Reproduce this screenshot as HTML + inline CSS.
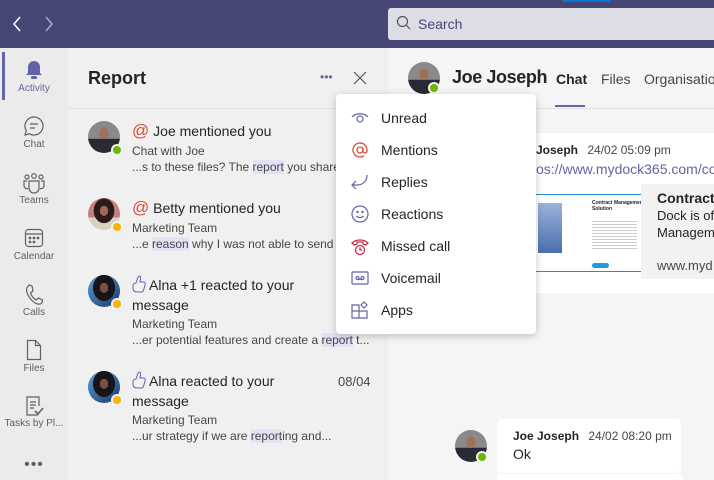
<!DOCTYPE html>
<html><head><style>
*{margin:0;padding:0;box-sizing:border-box}
body{width:714px;height:480px;overflow:hidden;font-family:"Liberation Sans",sans-serif;background:#f5f5f5;position:relative;color:#252424}
.abs{position:absolute}
.top{left:0;top:0;width:714px;height:48px;background:#464775}
.rail{left:0;top:48px;width:68px;height:432px;background:#ebebeb}
.ri{position:absolute;left:0;width:68px;text-align:center;font-size:10px;color:#616161}
.list{left:68px;top:48px;width:320px;height:432px;background:#f0f0f0}
.av{position:absolute;width:32px;height:32px;border-radius:50%}
.st{position:absolute;width:12px;height:12px;border-radius:50%;border:2px solid #f0f0f0}
.t1{font-size:14px;color:#252424}
.t2{font-size:12px;color:#484644}
.hl{background:#e2e2f6}
.menu{left:336px;top:94px;width:200px;height:240px;background:#fff;border-radius:4px;box-shadow:0 2px 8px rgba(0,0,0,.22)}
.mi{position:absolute;left:45px;font-size:14px;color:#252424}
.mic{position:absolute;left:14px;width:20px;height:20px}
.thumb{display:inline-block;vertical-align:-3px;margin-right:3px}
.joe{background:radial-gradient(ellipse at 50% 38%,#a07058 0 20%,transparent 21%),linear-gradient(180deg,#8a8a8a 0 55%,#2a2a35 56%);}
.alna{background:radial-gradient(ellipse at 50% 40%,#7a5040 0 18%,#151515 19% 48%,transparent 49%),linear-gradient(135deg,#5a9ad8,#1a3a6a);}
.betty{background:radial-gradient(ellipse at 50% 40%,#a06858 0 18%,#2a1a1a 19% 45%,transparent 46%),linear-gradient(180deg,#c08080 0 60%,#d8d0c0 61%);}
</style></head><body>
<div class="abs top"></div>
<div class="abs" style="left:563px;top:0;width:48px;height:2px;background:#0078d4"></div>
<svg class="abs" style="left:10px;top:14px" width="50" height="20"><path d="M10 3 L4 10 L10 17" stroke="#fff" stroke-width="1.5" fill="none"/><path d="M36 3 L42 10 L36 17" stroke="#a8a9c8" stroke-width="1.5" fill="none"/></svg>
<div class="abs" style="left:388px;top:8px;width:326px;height:32px;background:#dcdde5;border-radius:3px 0 0 3px"></div>
<svg class="abs" style="left:396px;top:15px" width="16" height="16"><circle cx="6.5" cy="6.5" r="5" stroke="#555" stroke-width="1.2" fill="none"/><path d="M10 10 L14 14" stroke="#555" stroke-width="1.2"/></svg>
<div class="abs" style="left:418px;top:16px;font-size:14px;color:#464775">Search</div>

<div class="abs rail"></div>
<div class="abs" style="left:2px;top:52px;width:3px;height:48px;background:#6264a7"></div>
<svg class="abs" style="left:24px;top:58px" width="20" height="22"><path d="M4 15 V9 a6 6 0 0 1 12 0 V15 L18 17 H2 Z" fill="#6264a7"/><rect x="7" y="18" width="6" height="3" rx="1.5" fill="#6264a7"/></svg>
<div class="ri" style="top:83px;color:#6264a7">Activity</div>
<svg class="abs" style="left:23px;top:115px" width="22" height="22" fill="none" stroke="#616161" stroke-width="1.2"><path d="M11 2a9 9 0 1 1-4.5 16.8L2 20l1.3-4.3A9 9 0 0 1 11 2z"/><path d="M7 9h8M7 13h5"/></svg>
<div class="ri" style="top:139px">Chat</div>
<svg class="abs" style="left:23px;top:172px" width="22" height="22" fill="none" stroke="#616161" stroke-width="1.2"><circle cx="11" cy="4" r="2.3"/><circle cx="4" cy="5" r="2"/><circle cx="18" cy="5" r="2"/><path d="M6 9h10v7a5 5 0 0 1-10 0z"/><path d="M4 9H1v5a3 3 0 0 0 4 2.5M18 9h3v5a3 3 0 0 1-4 2.5"/></svg>
<div class="ri" style="top:195px">Teams</div>
<svg class="abs" style="left:24px;top:228px" width="20" height="20" fill="none" stroke="#616161" stroke-width="1.2"><rect x="1.5" y="1.5" width="17" height="17" rx="3"/><path d="M1.5 6h17"/><circle cx="6" cy="10" r=".8" fill="#616161"/><circle cx="10" cy="10" r=".8" fill="#616161"/><circle cx="14" cy="10" r=".8" fill="#616161"/><circle cx="6" cy="14" r=".8" fill="#616161"/><circle cx="10" cy="14" r=".8" fill="#616161"/></svg>
<div class="ri" style="top:251px">Calendar</div>
<svg class="abs" style="left:24px;top:284px" width="20" height="22" fill="none" stroke="#616161" stroke-width="1.2"><path d="M5 1 L8 2 L9 7 L6.5 9 C7.5 12 9.5 14.5 12 16 L14.5 14 L18.5 16 L18 19 C16 21 12 20.5 8 16.5 C4 12.5 1.5 7 3 3.5 Z"/></svg>
<div class="ri" style="top:307px">Calls</div>
<svg class="abs" style="left:26px;top:339px" width="16" height="22" fill="none" stroke="#616161" stroke-width="1.2"><path d="M1.5 1.5h8l5 5v14h-13z M9.5 1.5v5h5"/></svg>
<div class="ri" style="top:363px">Files</div>
<svg class="abs" style="left:25px;top:395px" width="20" height="22" fill="none" stroke="#616161" stroke-width="1.2"><path d="M13 20H2V2h12v9"/><path d="M5 7h6M5 10h6M5 13h4"/><path d="M10 16l3 3 5-6" stroke-width="1.6"/></svg>
<div class="ri" style="top:418px;font-size:10px">Tasks by Pl...</div>
<div class="ri" style="top:456px;font-size:16px;letter-spacing:1px">•••</div>

<div class="abs list"></div>
<div class="abs" style="left:88px;top:68px;font-size:18px;font-weight:bold">Report</div>
<div class="abs" style="left:320px;top:70px;font-size:12px;color:#6264a7">•••</div>
<svg class="abs" style="left:353px;top:71px" width="14" height="14"><path d="M1 1L13 13M13 1L1 13" stroke="#555" stroke-width="1.2"/></svg>
<div class="abs" style="left:68px;top:108px;width:320px;height:1px;background:#e0e0e0"></div>

<div class="av abs joe" style="left:88px;top:121px"></div>
<div class="st abs" style="left:111px;top:144px;background:#6bb700"></div>
<div class="abs t1" style="left:132px;top:121px"><span style="color:#d74d3a;font-size:17px">@</span> Joe mentioned you</div>
<div class="abs t2" style="left:132px;top:144px">Chat with Joe</div>
<div class="abs t2" style="left:132px;top:160px;white-space:nowrap">...s to these files? The <span class="hl">report</span> you shared</div>

<div class="av abs betty" style="left:88px;top:198px"></div>
<div class="st abs" style="left:111px;top:221px;background:#f8b600"></div>
<div class="abs t1" style="left:132px;top:198px"><span style="color:#d74d3a;font-size:17px">@</span> Betty mentioned you</div>
<div class="abs t2" style="left:132px;top:221px">Marketing Team</div>
<div class="abs t2" style="left:132px;top:237px;white-space:nowrap">...e <span class="hl">reason</span> why I was not able to send y</div>

<div class="av abs alna" style="left:88px;top:275px"></div>
<div class="st abs" style="left:111px;top:298px;background:#f8b600"></div>
<div class="abs t1" style="left:132px;top:275px;width:190px;line-height:20px"><svg class="thumb" width="14" height="18" viewBox="0 0 14 18" fill="none" stroke="#6264a7" stroke-width="1"><path d="M4 8 L6 2 C7 0.5 9 1 8.5 3 L8 7 H11.5 C13 7 13.5 8.5 13 10 L11.5 15.5 C11 17 10 17 9 17 H5 C3 17 1 16 1 13 V10 C1 9 2.5 8 4 8Z"/></svg>Alna +1 reacted to your message</div>
<div class="abs t2" style="left:132px;top:317px">Marketing Team</div>
<div class="abs t2" style="left:132px;top:333px;white-space:nowrap">...er potential features and create a <span class="hl">report</span> t...</div>

<div class="av abs alna" style="left:88px;top:371px"></div>
<div class="st abs" style="left:111px;top:394px;background:#f8b600"></div>
<div class="abs t1" style="left:132px;top:371px;width:170px;line-height:20px"><svg class="thumb" width="14" height="18" viewBox="0 0 14 18" fill="none" stroke="#6264a7" stroke-width="1"><path d="M4 8 L6 2 C7 0.5 9 1 8.5 3 L8 7 H11.5 C13 7 13.5 8.5 13 10 L11.5 15.5 C11 17 10 17 9 17 H5 C3 17 1 16 1 13 V10 C1 9 2.5 8 4 8Z"/></svg>Alna reacted to your message</div>
<div class="abs t2" style="left:338px;top:374px;font-size:13px">08/04</div>
<div class="abs t2" style="left:132px;top:413px">Marketing Team</div>
<div class="abs t2" style="left:132px;top:429px;white-space:nowrap">...ur strategy if we are <span class="hl">report</span>ing and...</div>

<div class="av abs joe" style="left:408px;top:62px"></div>
<div class="st abs" style="left:428px;top:82px;background:#6bb700;border-color:#f5f5f5"></div>
<div class="abs" style="left:452px;top:67px;font-size:18px;font-weight:bold;letter-spacing:-0.4px">Joe Joseph</div>
<div class="abs" style="left:556px;top:71px;font-size:14px;font-weight:bold">Chat</div>
<div class="abs" style="left:601px;top:71px;font-size:14px;color:#484644">Files</div>
<div class="abs" style="left:644px;top:71px;font-size:14px;color:#484644">Organisation</div>
<div class="abs" style="left:555px;top:105px;width:30px;height:2px;background:#6264a7"></div>
<div class="abs" style="left:388px;top:108px;width:326px;height:1px;background:#e4e4e4"></div>

<div class="abs" style="left:498px;top:133px;width:216px;height:160px;background:#fff"></div>
<div class="abs" style="left:536px;top:143px;font-size:12px;font-weight:bold">Joseph <span style="font-weight:normal;color:#484644;margin-left:6px">24/02 05:09 pm</span></div>
<div class="abs" style="left:536px;top:161px;font-size:14px;color:#6264a7;white-space:nowrap">os://www.mydock365.com/co</div>
<div class="abs" style="left:536px;top:194px;width:106px;height:78px;background:#fff;border-top:1px solid #2a8ad0;border-bottom:1px solid #2a8ad0"></div>
<div class="abs" style="left:538px;top:203px;width:24px;height:50px;background:linear-gradient(#9bb3d8,#4a6fb0)"></div>
<div class="abs" style="left:592px;top:200px;font-size:5px;font-weight:bold">Contract Managemen<br>Solution</div>
<div class="abs" style="left:592px;top:219px;width:45px;height:30px;background:repeating-linear-gradient(#fff 0 2px,#ccc 2px 3px)"></div>
<div class="abs" style="left:592px;top:263px;width:17px;height:5px;background:#1a9ee0;border-radius:3px"></div>
<div class="abs" style="left:641px;top:184px;width:73px;height:95px;background:#f3f2f1"></div>
<div class="abs" style="left:657px;top:190px;font-size:14px;font-weight:bold">Contract</div>
<div class="abs" style="left:657px;top:207px;font-size:13px;line-height:17px;white-space:nowrap">Dock is off<br>Manageme</div>
<div class="abs" style="left:657px;top:258px;font-size:13px;color:#484644">www.myd</div>

<div class="av abs joe" style="left:455px;top:430px"></div>
<div class="st abs" style="left:476px;top:451px;background:#6bb700;border-color:#f5f5f5"></div>
<div class="abs" style="left:497px;top:419px;width:184px;height:54px;background:#fff;border-radius:4px"></div>
<div class="abs" style="left:497px;top:474px;width:185px;height:6px;background:#fff"></div>
<div class="abs" style="left:513px;top:429px;font-size:12px;font-weight:bold">Joe Joseph <span style="font-weight:normal;color:#484644;margin-left:6px">24/02 08:20 pm</span></div>
<div class="abs" style="left:513px;top:446px;font-size:14px">Ok</div>

<div class="abs menu">
<svg class="mic" style="top:14px" viewBox="0 0 20 20" fill="none" stroke="#6264a7" stroke-width="1.2"><path d="M2 9a9 6 0 0 1 16 0"/><circle cx="10" cy="11" r="3"/></svg>
<div class="mi" style="top:16px">Unread</div>
<svg class="mic" style="top:46px" viewBox="0 0 20 20" fill="none" stroke="#d74d3a" stroke-width="1.3"><circle cx="10" cy="10" r="3"/><path d="M13 8v3a2 2 0 0 0 4 0v-1a7 7 0 1 0-3 5.7"/></svg>
<div class="mi" style="top:48px">Mentions</div>
<svg class="mic" style="top:78px" viewBox="0 0 20 20" fill="none" stroke="#6264a7" stroke-width="1.2"><path d="M17 3c0 6-4 10-10 10H2M6 9l-4 4 4 4"/></svg>
<div class="mi" style="top:80px">Replies</div>
<svg class="mic" style="top:110px" viewBox="0 0 20 20" fill="none" stroke="#6264a7" stroke-width="1.2"><circle cx="10" cy="10" r="8"/><path d="M6.5 12a4.5 4.5 0 0 0 7 0"/><circle cx="7.5" cy="8" r=".6" fill="#6264a7"/><circle cx="12.5" cy="8" r=".6" fill="#6264a7"/></svg>
<div class="mi" style="top:112px">Reactions</div>
<svg class="mic" style="top:142px" viewBox="0 0 20 20" fill="none" stroke="#c4314b" stroke-width="1.3"><path d="M2 7c4-4 12-4 16 0l-2 2-3-1V6H7v2L4 9z"/><circle cx="10" cy="14" r="4.5"/><path d="M10 11.5V14h2"/></svg>
<div class="mi" style="top:144px">Missed call</div>
<svg class="mic" style="top:174px" viewBox="0 0 20 20" fill="none" stroke="#6264a7" stroke-width="1.2"><rect x="2" y="4" width="16" height="12" rx="1"/><circle cx="7.5" cy="10" r="1.5"/><circle cx="12.5" cy="10" r="1.5"/><path d="M7.5 11.5h5"/></svg>
<div class="mi" style="top:176px">Voicemail</div>
<svg class="mic" style="top:206px" viewBox="0 0 20 20" fill="none" stroke="#6264a7" stroke-width="1.2"><path d="M2 5h7v13H2zM9 11h8v7H9zM2 11h7"/><path d="M14 2l3 3-3 3-3-3z"/></svg>
<div class="mi" style="top:208px">Apps</div>
</div>
</body></html>
